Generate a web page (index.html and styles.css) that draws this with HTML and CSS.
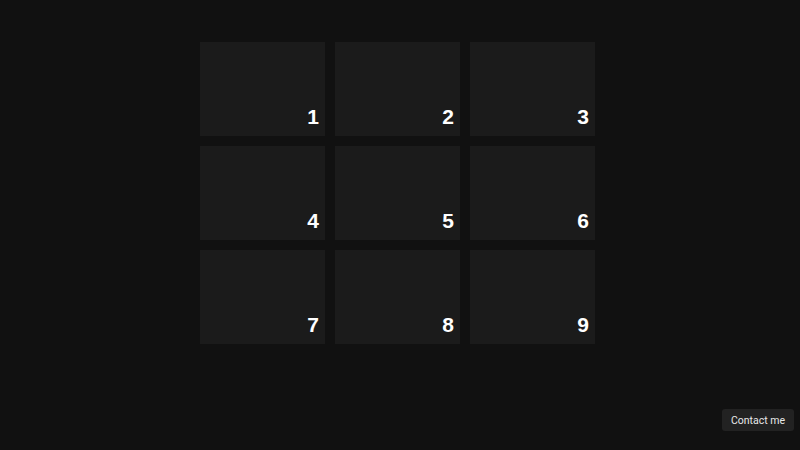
FILE: index.html
```html
<!DOCTYPE html>
<html>
<head>
<meta charset="utf-8">
<link rel="stylesheet" href="styles.css">
</head>
<body>
<main class="page">
  <div class="grid">
    <div class="tile"><span class="num">1</span></div>
    <div class="tile"><span class="num">2</span></div>
    <div class="tile"><span class="num">3</span></div>
    <div class="tile"><span class="num">4</span></div>
    <div class="tile"><span class="num">5</span></div>
    <div class="tile"><span class="num">6</span></div>
    <div class="tile"><span class="num">7</span></div>
    <div class="tile"><span class="num">8</span></div>
    <div class="tile"><span class="num">9</span></div>
  </div>
</main>
<button class="contact">Contact me</button>
</body>
</html>
```
FILE: styles.css
```css
html, body {
  margin: 0;
  padding: 0;
  background: #111111;
  width: 800px;
  height: 450px;
  overflow: hidden;
}
.page {
  padding: 42px 0 0 200px;
}
.grid {
  display: grid;
  grid-template-columns: repeat(3, 125px);
  grid-auto-rows: 94px;
  gap: 10px;
}
.tile {
  background: #1b1b1b;
  display: flex;
  align-items: flex-end;
  justify-content: flex-end;
  padding: 0 6px 9px 0;
  box-sizing: border-box;
}
.num {
  font-family: "Liberation Sans", Arial, sans-serif;
  font-weight: bold;
  font-size: 21px;
  line-height: 21px;
  color: #ffffff;
}
.contact {
  position: fixed;
  right: 6px;
  bottom: 19px;
  width: 72px;
  height: 22px;
  padding: 0;
  border: none;
  border-radius: 3px;
  background: #222222;
  color: #e8e8e8;
  font-family: Roboto, "Liberation Sans", sans-serif;
  font-size: 10.5px;
}
```
